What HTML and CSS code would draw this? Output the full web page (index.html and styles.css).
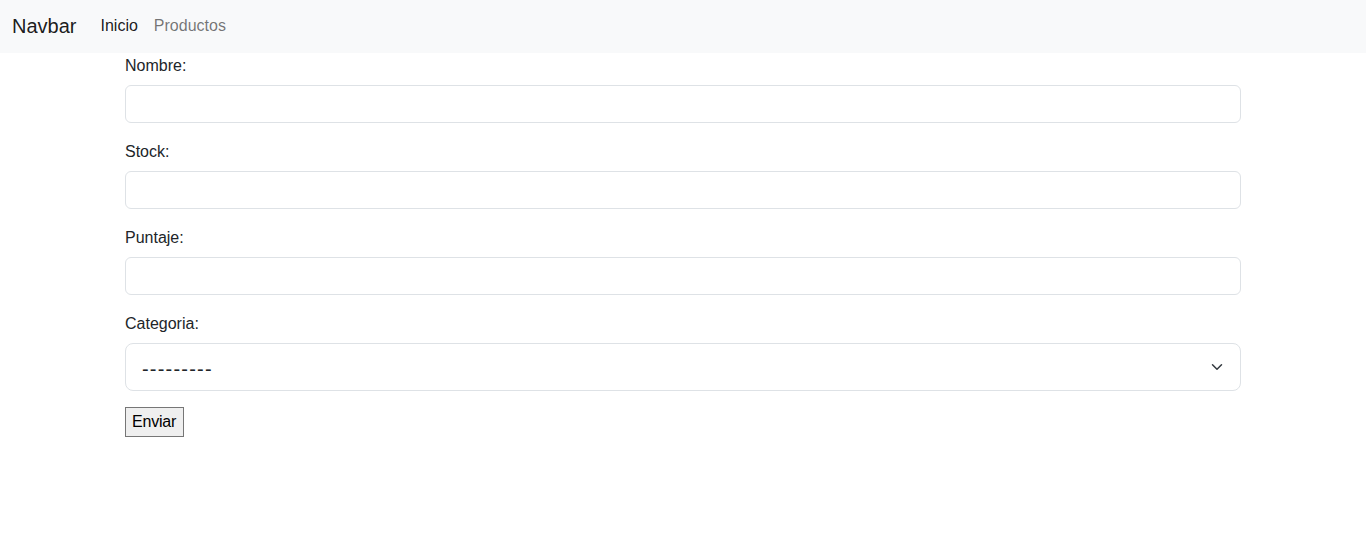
FILE: index.html
```html
<!DOCTYPE html>
<html lang="es">
<head>
<meta charset="utf-8">
<title>Productos</title>
<link rel="stylesheet" href="styles.css">
</head>
<body>
<nav class="navbar">
  <a class="brand" href="#">Navbar</a>
  <ul class="nav">
    <li><a class="nav-link active" href="#">Inicio</a></li>
    <li><a class="nav-link" href="#">Productos</a></li>
  </ul>
</nav>
<main class="container">
  <form class="form">
    <div class="group">
      <label for="nombre">Nombre:</label>
      <input id="nombre" class="control" type="text">
    </div>
    <div class="group">
      <label for="stock">Stock:</label>
      <input id="stock" class="control" type="text">
    </div>
    <div class="group">
      <label for="puntaje">Puntaje:</label>
      <input id="puntaje" class="control" type="text">
    </div>
    <div class="group">
      <label for="categoria">Categoria:</label>
      <div class="select-wrap">
        <select id="categoria" class="select">
          <option>---------</option>
        </select>
        <svg class="chevron" viewBox="0 0 16 16" width="16" height="12" aria-hidden="true"><path fill="none" stroke="#343a40" stroke-linecap="round" stroke-linejoin="round" stroke-width="2" d="m2 5 6 6 6-6"/></svg>
      </div>
    </div>
    <button type="button" class="submit">Enviar</button>
  </form>
</main>
</body>
</html>
```
FILE: styles.css
```css
* { box-sizing: border-box; }
html, body { margin: 0; padding: 0; }
body {
  font-family: "Liberation Sans", Arial, sans-serif;
  font-size: 16px;
  line-height: 24px;
  color: #212529;
  background: #fff;
}
.navbar {
  height: 53px;
  background: #f8f9fa;
  display: flex;
  align-items: center;
  padding: 0 12px 1px;
}
.brand {
  font-size: 20px;
  line-height: 30px;
  color: rgba(0,0,0,.9);
  text-decoration: none;
  margin-right: 16px;
}
.nav {
  list-style: none;
  margin: 0;
  padding: 0;
  display: flex;
}
.nav-link {
  display: block;
  padding: 0 8px;
  color: rgba(0,0,0,.55);
  text-decoration: none;
  line-height: 24px;
}
.nav-link.active { color: rgba(0,0,0,.9); }
.container {
  width: 1140px;
  margin: 0 auto;
  padding: 0 12px;
}
.group { margin-bottom: 16px; }
.group label {
  display: block;
  margin-bottom: 8px;
  padding-top: 2px;
  line-height: 22px;
}
.control {
  display: block;
  width: 100%;
  height: 38px;
  padding: 6px 12px;
  font: inherit;
  color: #212529;
  border: 1px solid #dee2e6;
  border-radius: 6px;
  background: #fff;
  outline: none;
}
.select-wrap { position: relative; }
.select {
  display: block;
  width: 100%;
  height: 48px;
  padding: 10px 48px 6px 16px;
  font-family: inherit;
  font-size: 20px;
  line-height: 30px;
  letter-spacing: 1.2px;
  color: #212529;
  border: 1px solid #dee2e6;
  border-radius: 8px;
  background: #fff;
  appearance: none;
  -webkit-appearance: none;
  outline: none;
}
.chevron {
  position: absolute;
  right: 16px;
  top: 18px;
  pointer-events: none;
}
.submit {
  font: inherit;
  line-height: 24px;
  height: 30px;
  padding: 1px 7px 1px 6px;
  letter-spacing: -0.2px;
  color: #000;
  background: #efefef;
  border: 1px solid #767676;
  border-radius: 0;
}
```
